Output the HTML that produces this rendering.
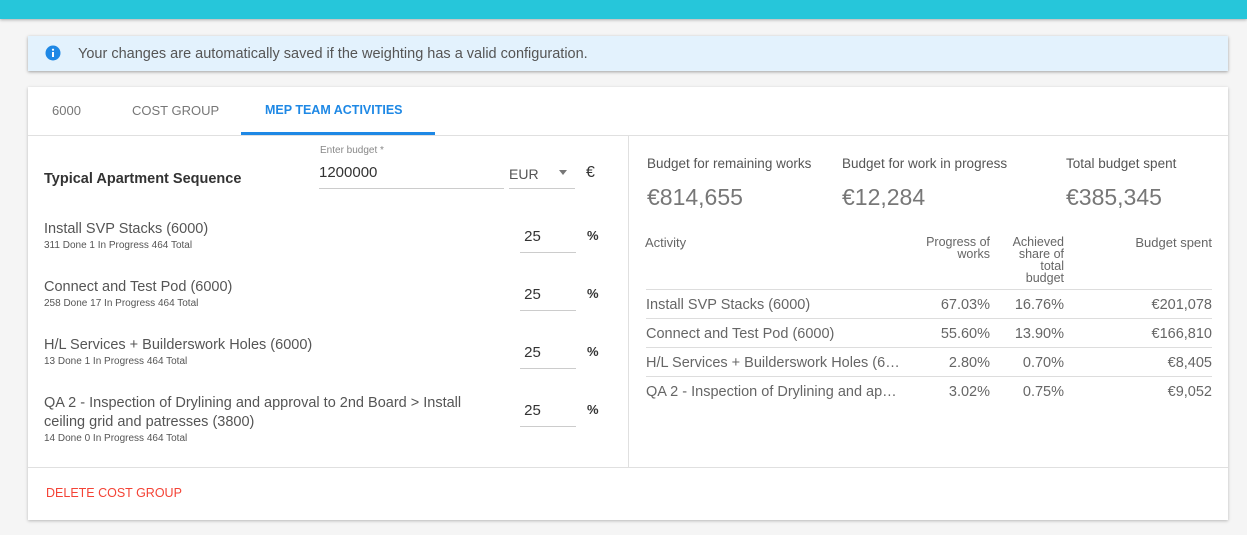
<!DOCTYPE html>
<html><head><style>
body{margin:0;width:1247px;height:535px;background:#f5f5f5;font-family:"Liberation Sans",sans-serif;position:relative;overflow:hidden;color:#444}
.a{position:absolute;white-space:nowrap}
.top{left:0;top:0;width:1247px;height:19px;background:#26c6da;box-shadow:0 1px 3px rgba(0,0,0,.3)}
.info{left:28px;top:36px;width:1200px;height:35px;background:#e3f2fd;box-shadow:0 1px 3px rgba(0,0,0,.35)}
.card{left:28px;top:87px;width:1200px;height:433px;background:#fff;box-shadow:0 1px 3px rgba(0,0,0,.25)}
.tab{font-size:13px;color:#777;top:103px}
.s{font-size:10px;color:#555}
.t{font-size:14.5px;color:#555}
.pin{width:56px;border-bottom:1px solid #ccc;height:24px;font-size:15px;color:#333}
.pc{font-size:13px;font-weight:bold;color:#333}
.row{left:646px;width:566px;height:28px;border-top:1px solid #ddd;font-size:14.5px;color:#666}
.row span{position:absolute;top:7px}
.h{font-size:12.5px;color:#666;text-align:right;line-height:12px}
</style></head><body>
<div class="a top"></div>
<div class="a info"></div>
<svg class="a" style="left:45px;top:45px" width="16" height="16"><circle cx="8" cy="8" r="7.5" fill="#1e88e5"/><rect x="7" y="7" width="2" height="5" fill="#fff"/><circle cx="8" cy="4.7" r="1.1" fill="#fff"/></svg>
<div class="a" style="left:78px;top:46px;font-size:14.5px;color:#555">Your changes are automatically saved if the weighting has a valid configuration.</div>
<div class="a card"></div>
<div class="a tab" style="left:52px">6000</div>
<div class="a tab" style="left:132px">COST GROUP</div>
<div class="a tab" style="left:265px;color:#1e88e5;font-weight:bold;font-size:12.5px">MEP TEAM ACTIVITIES</div>
<div class="a" style="left:241px;top:132px;width:194px;height:3px;background:#1e88e5"></div>
<div class="a" style="left:28px;top:135px;width:1200px;height:1px;background:#e0e0e0"></div>
<div class="a" style="left:628px;top:136px;width:1px;height:331px;background:#e0e0e0"></div>
<div class="a" style="left:28px;top:467px;width:1200px;height:1px;background:#e0e0e0"></div>

<div class="a" style="left:44px;top:171px;font-size:14.5px;font-weight:bold;color:#333">Typical Apartment Sequence</div>
<div class="a" style="left:320px;top:145px;font-size:10px;color:#888">Enter budget *</div>
<div class="a" style="left:319px;top:164px;width:185px;height:24px;border-bottom:1px solid #ccc;font-size:15px;color:#333">1200000</div>
<div class="a" style="left:509px;top:166px;width:66px;height:22px;border-bottom:1px solid #ccc;font-size:14px;color:#555">EUR<span style="position:absolute;left:50px;top:4px;width:0;height:0;border-left:4px solid transparent;border-right:4px solid transparent;border-top:5px solid #777"></span></div>
<div class="a" style="left:586px;top:164px;font-size:16px;color:#333">€</div>

<div class="a t" style="left:44px;top:221px">Install SVP Stacks (6000)</div>
<div class="a s" style="left:44px;top:240px">311 Done 1 In Progress 464 Total</div>
<div class="a pin" style="left:520px;top:228px;">&nbsp;25</div><div class="a pc" style="left:587px;top:228px">%</div>
<div class="a t" style="left:44px;top:279px">Connect and Test Pod (6000)</div>
<div class="a s" style="left:44px;top:298px">258 Done 17 In Progress 464 Total</div>
<div class="a pin" style="left:520px;top:286px;">&nbsp;25</div><div class="a pc" style="left:587px;top:286px">%</div>
<div class="a t" style="left:44px;top:337px">H/L Services + Builderswork Holes (6000)</div>
<div class="a s" style="left:44px;top:356px">13 Done 1 In Progress 464 Total</div>
<div class="a pin" style="left:520px;top:344px;">&nbsp;25</div><div class="a pc" style="left:587px;top:344px">%</div>
<div class="a t" style="left:44px;top:395px">QA 2 - Inspection of Drylining and approval to 2nd Board &gt; Install</div>
<div class="a t" style="left:44px;top:414px">ceiling grid and patresses (3800)</div>
<div class="a s" style="left:44px;top:433px">14 Done 0 In Progress 464 Total</div>
<div class="a pin" style="left:520px;top:402px;">&nbsp;25</div><div class="a pc" style="left:587px;top:402px">%</div>

<div class="a" style="left:647px;top:156px;font-size:13.5px;color:#555">Budget for remaining works</div>
<div class="a" style="left:842px;top:156px;font-size:13.5px;color:#555">Budget for work in progress</div>
<div class="a" style="left:1066px;top:156px;font-size:13.5px;color:#555">Total budget spent</div>
<div class="a" style="left:647px;top:184px;font-size:23px;color:#777">€814,655</div>
<div class="a" style="left:842px;top:184px;font-size:23px;color:#777">€12,284</div>
<div class="a" style="left:1066px;top:184px;font-size:23px;color:#777">€385,345</div>

<div class="a" style="left:645px;top:235px;font-size:13px;color:#666">Activity</div>
<div class="a h" style="right:257px;top:236px">Progress of<br>works</div>
<div class="a h" style="right:183px;top:236px">Achieved<br>share of<br>total<br>budget</div>
<div class="a" style="right:35px;top:235px;font-size:13px;color:#666">Budget spent</div>

<div class="a row" style="top:289px"><span style="left:0">Install SVP Stacks (6000)</span><span style="right:222px">67.03%</span><span style="right:148px">16.76%</span><span style="right:0">€201,078</span></div>
<div class="a row" style="top:318px"><span style="left:0">Connect and Test Pod (6000)</span><span style="right:222px">55.60%</span><span style="right:148px">13.90%</span><span style="right:0">€166,810</span></div>
<div class="a row" style="top:347px"><span style="left:0">H/L Services + Builderswork Holes (6…</span><span style="right:222px">2.80%</span><span style="right:148px">0.70%</span><span style="right:0">€8,405</span></div>
<div class="a row" style="top:376px"><span style="left:0">QA 2 - Inspection of Drylining and ap…</span><span style="right:222px">3.02%</span><span style="right:148px">0.75%</span><span style="right:0">€9,052</span></div>

<div class="a" style="left:46px;top:486px;font-size:12.5px;color:#f44336">DELETE COST GROUP</div>
</body></html>
